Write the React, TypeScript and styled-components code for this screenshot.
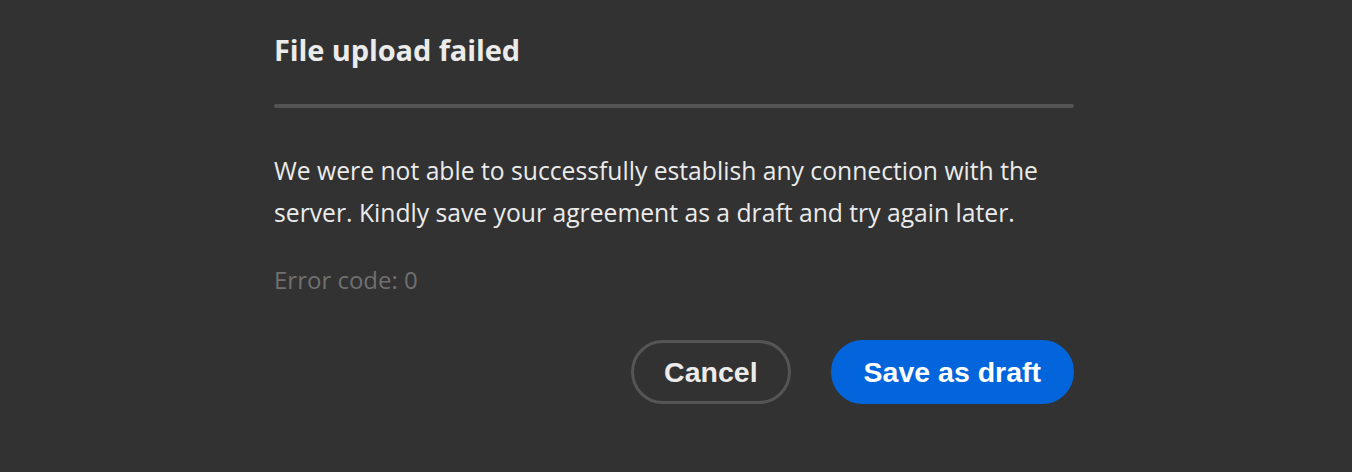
import styled, { createGlobalStyle } from "styled-components";

const GlobalStyle = createGlobalStyle`
  html, body {
    margin: 0;
    padding: 0;
    background: #323232;
  }
  body {
    font-family: "Open Sans", "Noto Sans", sans-serif;
  }
`;

const Page = styled.div`
  width: 1352px;
  height: 472px;
  box-sizing: border-box;
  padding-right: 4px;
  display: flex;
  justify-content: center;
  background: #323232;
  overflow: hidden;
`;

const Dialog = styled.section`
  width: 800px;
  padding-top: 30px;
  display: flex;
  flex-direction: column;
`;

const Title = styled.h2`
  margin: 0;
  font-size: 29px;
  line-height: 40px;
  font-weight: 700;
  color: #ebebeb;
  letter-spacing: -0.1px;
`;

const Divider = styled.hr`
  margin: 34px 0 0;
  border: none;
  height: 4px;
  border-radius: 2px;
  background: #545454;
`;

const Body = styled.p`
  margin: 42px 0 0;
  font-size: 24.7px;
  line-height: 42px;
  color: #ebebeb;
`;

const ErrorCode = styled.p`
  margin: 25px 0 0;
  font-size: 24px;
  line-height: 42px;
  color: #707070;
`;

const Actions = styled.div`
  margin-top: 39px;
  display: flex;
  justify-content: flex-end;
  gap: 40px;
`;

const Button = styled.button<{ $primary?: boolean }>`
  height: 64px;
  padding: 0 30px;
  border-radius: 32px;
  font-family: "Liberation Sans", Arial, sans-serif;
  font-size: 28.5px;
  font-weight: 700;
  cursor: pointer;
  color: ${(p) => (p.$primary ? "#ffffff" : "#ebebeb")};
  background: ${(p) => (p.$primary ? "#0265dc" : "transparent")};
  border: 3px solid ${(p) => (p.$primary ? "#0265dc" : "#555555")};
`;

export default function App() {
  return (
    <>
      <GlobalStyle />
      <Page>
        <Dialog>
          <Title>File upload failed</Title>
          <Divider />
          <Body>
            We were not able to successfully establish any connection with the
            server. Kindly save your agreement as a draft and try again later.
          </Body>
          <ErrorCode>Error code: 0</ErrorCode>
          <Actions>
            <Button>Cancel</Button>
            <Button $primary>Save as draft</Button>
          </Actions>
        </Dialog>
      </Page>
    </>
  );
}
